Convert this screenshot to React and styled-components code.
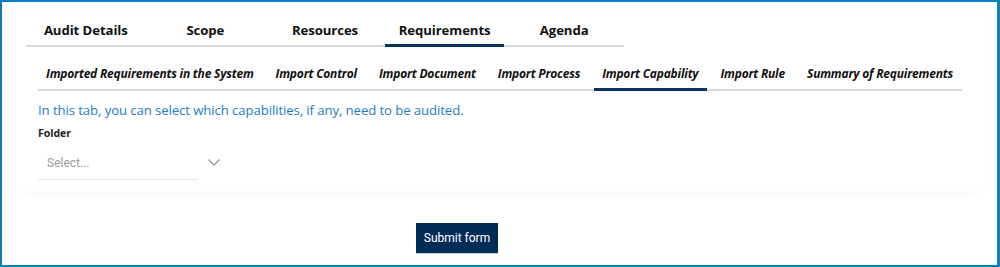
import React from 'react';
import styled, { createGlobalStyle } from 'styled-components';

const navy = '#0b3460';
const line = '#d9d9d9';

const GlobalStyle = createGlobalStyle`
    html, body {
        margin: 0;
        padding: 0;
        background: #fff;
    }
    body {
        font-family: "Open Sans", "Noto Sans", sans-serif;
        color: #111;
    }
`;

const Frame = styled.div`
    box-sizing: border-box;
    width: 1000px;
    height: 267px;
    border: 2px solid #0a7fc4;
    border-right-width: 3px;
    background: #fff;
    overflow: hidden;
`;

const Card = styled.div`
    margin: 0 12px;
    padding: 12px 0 11px 10px;
    background: #fff;
    box-shadow: 0 6px 14px -6px rgba(0, 30, 60, 0.045);
`;

const MainTabs = styled.div`
    display: flex;
    width: 598px;
    margin-left: 2px;
    border-bottom: 2px solid ${line};
`;

const MainTab = styled.div`
    width: 120px;
    height: 33px;
    box-sizing: border-box;
    display: flex;
    align-items: center;
    justify-content: center;
    font-size: 13.2px;
    font-weight: 700;
    letter-spacing: -0.1px;
    border-bottom: 3px solid ${(p) => (p.$active ? navy : 'transparent')};
    margin-bottom: -2px;
    padding-top: 1px;
`;

const SubTabs = styled.div`
    display: flex;
    width: 924px;
    margin-left: 14px;
    margin-top: 11px;
    border-bottom: 2px solid ${line};
`;

const SubTab = styled.div`
    height: 33px;
    box-sizing: border-box;
    padding: 0 9px 0 8px;
    display: flex;
    align-items: center;
    font-size: 12px;
    font-weight: 700;
    font-style: italic;
    letter-spacing: -0.2px;
    white-space: nowrap;
    border-bottom: 3px solid ${(p) => (p.$active ? navy : 'transparent')};
    margin-bottom: -2px;
    margin-right: 5px;
`;

const Body = styled.div`
    margin-left: 14px;
`;

const Intro = styled.p`
    margin: 10px 0 0;
    font-size: 13.2px;
    color: #1f7cc1;
    letter-spacing: -0.1px;
`;

const Label = styled.div`
    margin-top: 7px;
    font-size: 10.5px;
    font-weight: 700;
    color: #222;
`;

const SelectRow = styled.div`
    display: flex;
    align-items: center;
    margin-top: 6px;
`;

const SelectField = styled.div`
    width: 160px;
    height: 34px;
    box-sizing: border-box;
    padding: 0 0 0 9px;
    display: flex;
    align-items: center;
    border-bottom: 1px solid #e3e3e3;
    font-family: Roboto, "Liberation Sans", sans-serif;
    font-size: 12px;
    color: #9a9a9a;
`;

const Chevron = styled.svg`
    margin-left: 9px;
    margin-bottom: 1px;
`;

const Footer = styled.div`
    padding: 32px 0 0 414px;
`;

const SubmitButton = styled.button`
    width: 82px;
    height: 31px;
    border: none;
    border-bottom: 1px solid #c7d0da;
    background: #032c57;
    color: #fff;
    font-family: Roboto, "Liberation Sans", sans-serif;
    font-size: 12px;
    cursor: pointer;
`;

const mainTabs = ['Audit Details', 'Scope', 'Resources', 'Requirements', 'Agenda'];
const subTabs = [
    'Imported Requirements in the System',
    'Import Control',
    'Import Document',
    'Import Process',
    'Import Capability',
    'Import Rule',
    'Summary of Requirements',
];

const App = () => (
    <>
        <GlobalStyle />
        <Frame>
            <Card>
                <MainTabs>
                    {mainTabs.map((t) => (
                        <MainTab key={t} $active={t === 'Requirements'}>
                            {t}
                        </MainTab>
                    ))}
                </MainTabs>
                <SubTabs>
                    {subTabs.map((t) => (
                        <SubTab key={t} $active={t === 'Import Capability'}>
                            {t}
                        </SubTab>
                    ))}
                </SubTabs>
                <Body>
                    <Intro>In this tab, you can select which capabilities, if any, need to be audited.</Intro>
                    <Label>Folder</Label>
                    <SelectRow>
                        <SelectField>Select...</SelectField>
                        <Chevron width="14" height="9" viewBox="0 0 14 9" fill="none">
                            <path d="M1.5 1.5 L7 7 L12.5 1.5" stroke="#9a9a9a" strokeWidth="1.4" />
                        </Chevron>
                    </SelectRow>
                </Body>
            </Card>
            <Footer>
                <SubmitButton>Submit form</SubmitButton>
            </Footer>
        </Frame>
    </>
);

export default App;
